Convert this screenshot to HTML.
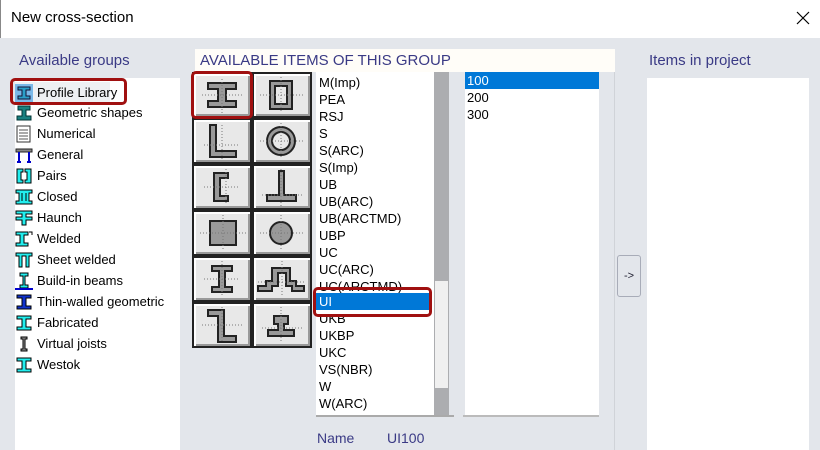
<!DOCTYPE html>
<html><head><meta charset="utf-8"><style>
*{margin:0;padding:0;box-sizing:border-box}
body{width:820px;height:450px;overflow:hidden;background:#e3e6eb;font-family:"Segoe UI","Liberation Sans",sans-serif;position:relative;font-size:13px}
.abs{position:absolute}
#title{left:0;top:0;width:820px;height:38px;background:#fff;border-left:1px solid #888}
#title span{position:absolute;left:10px;top:9px;font-size:15px;color:#000}
.hdr{color:#3a3a85;font-size:15px}
#lp{left:15px;top:78px;width:165px;height:372px;background:#fff}
.gi{position:absolute;left:0;height:21px;font-size:13px;color:#000;line-height:21px}
.gi svg{position:absolute;left:0;top:2px}
.gi span{position:absolute;left:22px;white-space:nowrap}
.btn{position:absolute;width:60px;height:46px;border:2px solid #222;background:#e8e8e8;box-shadow:inset 2px 2px 0 #fff,inset -2px -2px 0 #999}
.btn svg{position:absolute;left:0;top:0}
#list{left:316px;top:72px;width:118px;height:343px;background:#fff;overflow:hidden}
.li{position:absolute;left:3px;font-size:13px;color:#000;line-height:17px;white-space:nowrap}
</style></head><body>
<div id="title" class="abs"><span>New cross-section</span>
<svg class="abs" style="left:795px;top:11px" width="14" height="14"><path d="M1 1L13 13M13 1L1 13" stroke="#000" stroke-width="1.2"/></svg></div>
<div class="abs hdr" style="left:19px;top:52px">Available groups</div>
<div id="lp" class="abs">
<div class="gi" style="top:4px;background:#eef0f3;width:95px"><svg width="18" height="18"><rect x="0" y="0" width="18" height="18" fill="#7ab8e8"/><path d="M3 3h12v3h-4v6h4v3H3v-3h4V6H3z" fill="#2a9ec8" stroke="#113" stroke-width="1"/></svg><span>Profile Library</span></div>
<div class="gi" style="top:24px"><svg width="18" height="18"><path d="M3 2h12v4h-4v6h5v4H2v-4h5V6H3z" fill="#1a8080" stroke="#033" stroke-width="1"/></svg><span>Geometric shapes</span></div>
<div class="gi" style="top:45px"><svg width="18" height="18"><rect x="2" y="1" width="13" height="16" fill="#fff" stroke="#333"/><path d="M4 5h9M4 8h9M4 11h9M4 14h9" stroke="#555"/></svg><span>Numerical</span></div>
<div class="gi" style="top:66px"><svg width="18" height="18"><path d="M1 3h16v3H1z" fill="#888" stroke="#222"/><path d="M4 6v10M14 6v10M2 16h4M12 16h4" stroke="#00c" stroke-width="2"/></svg><span>General</span></div>
<div class="gi" style="top:87px"><svg width="18" height="18"><path d="M2 2h6v3H6v8h2v3H2zM16 2h-6v3h2v8h-2v3h6z" fill="#2ee" stroke="#000"/></svg><span>Pairs</span></div>
<div class="gi" style="top:108px"><svg width="18" height="18"><path d="M1 2h16v3h-3v8h3v3H1v-3h3V5H1z" fill="#2ee" stroke="#000"/><path d="M7 5v8M11 5v8" stroke="#000"/></svg><span>Closed</span></div>
<div class="gi" style="top:129px"><svg width="18" height="18"><path d="M1 2h16v3h-6v3h6v3h-6v5H7v-5H1V8h6V5H1z" fill="#2ee" stroke="#000"/></svg><span>Haunch</span></div>
<div class="gi" style="top:150px"><svg width="18" height="18"><path d="M1 2h12v3H9v8h4v3H1v-3h4V5H1z" fill="#2ee" stroke="#000"/><path d="M14 2h3v3" stroke="#000" fill="none"/></svg><span>Welded</span></div>
<div class="gi" style="top:171px"><svg width="18" height="18"><path d="M1 2h16v3h-3v11h-3V5H7v11H4V5H1z" fill="#2ee" stroke="#000"/></svg><span>Sheet welded</span></div>
<div class="gi" style="top:192px"><svg width="18" height="18"><path d="M5 1h8v3h-3v9h3v3H5v-3h3V4H5z" fill="#2ee" stroke="#000"/><path d="M0 17h18" stroke="#00c" stroke-width="2"/></svg><span>Build-in beams</span></div>
<div class="gi" style="top:213px"><svg width="18" height="18"><path d="M2 2h14v3h-5v8h5v3H2v-3h5V5H2z" fill="#13c" stroke="#000"/></svg><span>Thin-walled geometric</span></div>
<div class="gi" style="top:234px"><svg width="18" height="18"><path d="M2 2h14v3h-5v8h5v3H2v-3h5V5H2z" fill="#2ee" stroke="#000"/></svg><span>Fabricated</span></div>
<div class="gi" style="top:255px"><svg width="18" height="18"><path d="M6 2h6v2h-2v10h2v2H6v-2h2V4H6z" fill="#999" stroke="#000"/></svg><span>Virtual joists</span></div>
<div class="gi" style="top:276px"><svg width="18" height="18"><path d="M2 2h14v3h-5v8h5v3H2v-3h5V5H2z" fill="#2ee" stroke="#000"/></svg><span>Westok</span></div>
</div>
<div class="abs" style="left:10px;top:78px;width:117px;height:27px;border:3px solid #a01010;border-radius:5px"></div>

<div class="abs" style="left:195px;top:49px;width:420px;height:23px;background:#fffdf8"></div>
<div class="abs hdr" style="left:200px;top:52px;font-size:15px">AVAILABLE ITEMS OF THIS GROUP</div>

<!-- buttons -->
<div class="btn" style="left:192px;top:72px"><svg width="56" height="42"><path d="M14 9h28v6h-10v12h10v6H14v-6h10V15H14z" fill="#999" stroke="#222" stroke-width="2"/><path d="M8 21h40M28 5v34" stroke="#777" stroke-dasharray="1 2"/></svg></div>
<div class="btn" style="left:252px;top:72px"><svg width="56" height="42"><rect x="16" y="7" width="22" height="28" fill="#999" stroke="#222" stroke-width="2"/><rect x="21" y="12" width="12" height="18" fill="#e8e8e8" stroke="#222" stroke-width="2"/><path d="M6 21h44M27 3v36" stroke="#777" stroke-dasharray="1 2"/></svg></div>
<div class="btn" style="left:192px;top:118px"><svg width="56" height="42"><path d="M16 5h6v26h20v6H16z" fill="#999" stroke="#222" stroke-width="2"/><path d="M10 25h34M28 5v34" stroke="#777" stroke-dasharray="1 2"/></svg></div>
<div class="btn" style="left:252px;top:118px"><svg width="56" height="42"><circle cx="27" cy="21" r="14" fill="#999" stroke="#222" stroke-width="2"/><circle cx="27" cy="21" r="9" fill="#e8e8e8" stroke="#222" stroke-width="2"/><path d="M6 21h44M27 3v36" stroke="#777" stroke-dasharray="1 2"/></svg></div>
<div class="btn" style="left:192px;top:164px"><svg width="56" height="42"><path d="M20 7h14v5h-8v18h8v5H20z" fill="#999" stroke="#222" stroke-width="2"/><path d="M10 21h36M32 3v36" stroke="#777" stroke-dasharray="1 2"/></svg></div>
<div class="btn" style="left:252px;top:164px"><svg width="56" height="42"><path d="M25 5h5v24h12v6H13v-6h12z" fill="#999" stroke="#222" stroke-width="2"/><path d="M8 29h40M27 3v38" stroke="#777" stroke-dasharray="1 2"/></svg></div>
<div class="btn" style="left:192px;top:210px"><svg width="56" height="42"><rect x="16" y="9" width="26" height="24" fill="#999" stroke="#222" stroke-width="2"/><path d="M6 21h46M29 3v36" stroke="#777" stroke-dasharray="1 2"/></svg></div>
<div class="btn" style="left:252px;top:210px"><svg width="56" height="42"><circle cx="27" cy="21" r="11" fill="#999" stroke="#222" stroke-width="2"/><path d="M6 21h44M27 3v36" stroke="#777" stroke-dasharray="1 2"/></svg></div>
<div class="btn" style="left:192px;top:256px"><svg width="56" height="42"><path d="M18 8h20v5h-7v16h7v5H18v-5h7V13h-7z" fill="#999" stroke="#222" stroke-width="2"/><path d="M10 21h36M28 3v36" stroke="#777" stroke-dasharray="1 2"/></svg></div>
<div class="btn" style="left:252px;top:256px"><svg width="56" height="42"><path d="M4 28h8v-5h6V10h18v13h6v5h8v5H38v-5h-6V15h-8v13h-6v5H4z" fill="#999" stroke="#222" stroke-width="2"/><path d="M4 24h48M28 3v36" stroke="#777" stroke-dasharray="1 2"/></svg></div>
<div class="btn" style="left:192px;top:302px"><svg width="56" height="42"><path d="M14 6h16v26h12v6H24V12H14z" fill="#999" stroke="#222" stroke-width="2"/><path d="M8 21h40M28 3v36" stroke="#777" stroke-dasharray="1 2"/></svg></div>
<div class="btn" style="left:252px;top:302px"><svg width="56" height="42"><path d="M20 12h14v8h-4v6h10v6H14v-6h10v-6h-4z" fill="#999" stroke="#222" stroke-width="2"/><path d="M8 24h40M27 3v36" stroke="#777" stroke-dasharray="1 2"/></svg></div>
<div class="abs" style="left:191px;top:71px;width:62px;height:48px;border:3px solid #a01010;border-radius:5px"></div>

<!-- list -->
<div id="list" class="abs">
<div class="li" style="top:2px">M(Imp)</div><div class="li" style="top:19px">PEA</div><div class="li" style="top:36px">RSJ</div><div class="li" style="top:53px">S</div><div class="li" style="top:70px">S(ARC)</div><div class="li" style="top:87px">S(Imp)</div><div class="li" style="top:104px">UB</div><div class="li" style="top:121px">UB(ARC)</div><div class="li" style="top:138px">UB(ARCTMD)</div><div class="li" style="top:155px">UBP</div><div class="li" style="top:172px">UC</div><div class="li" style="top:189px">UC(ARC)</div><div class="li" style="top:206px">UC(ARCTMD)</div>
<div class="abs" style="left:0;top:221px;width:116px;height:17px;background:#0078d7"></div>
<div class="li" style="top:221px;color:#fff">UI</div>
<div class="li" style="top:238px">UKB</div><div class="li" style="top:255px">UKBP</div><div class="li" style="top:272px">UKC</div><div class="li" style="top:289px">VS(NBR)</div><div class="li" style="top:306px">W</div><div class="li" style="top:323px">W(ARC)</div>
</div>
<div class="abs" style="left:434px;top:72px;width:15px;height:343px;background:#acadb0"></div>
<div class="abs" style="left:435px;top:281px;width:13px;height:107px;background:#f0f0f0"></div>
<div class="abs" style="left:316px;top:415px;width:138px;height:2px;background:#aaa"></div>
<div class="abs" style="left:313px;top:287px;width:119px;height:30px;border:3px solid #a01010;border-radius:5px"></div>

<div class="abs" style="left:465px;top:72px;width:134px;height:343px;background:#fff"></div>
<div class="abs" style="left:465px;top:72px;width:134px;height:17px;background:#0078d7"></div>
<div class="li" style="left:467px;top:72px;color:#fff">100</div>
<div class="li" style="left:467px;top:89px">200</div>
<div class="li" style="left:467px;top:106px">300</div>
<div class="abs" style="left:463px;top:415px;width:136px;height:2px;background:#bbb"></div>

<div class="abs hdr" style="left:317px;top:430px;font-size:14px">Name</div>
<div class="abs hdr" style="left:387px;top:430px;font-size:14px">UI100</div>

<div class="abs" style="left:614px;top:72px;width:1px;height:378px;background:#d0d3d8"></div>
<div class="abs" style="left:617px;top:255px;width:24px;height:42px;border:1px solid #a8acb8;border-radius:3px;font-size:11px;line-height:40px;text-align:center;color:#223">-&gt;</div>

<div class="abs hdr" style="left:649px;top:52px">Items in project</div>
<div class="abs" style="left:647px;top:78px;width:162px;height:372px;background:#fff"></div>
</body></html>
